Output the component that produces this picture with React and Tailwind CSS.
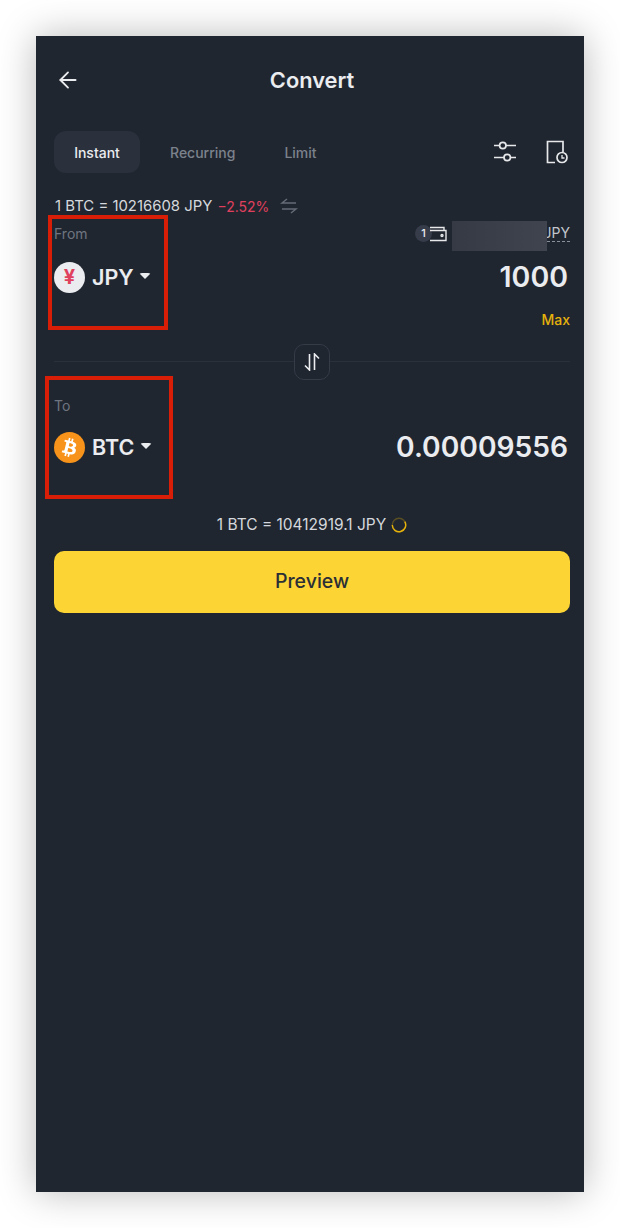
import { ArrowLeft } from "lucide-react";

const font = "font-['Inter','Liberation_Sans',sans-serif]";

function SlidersIcon() {
  return (
    <svg width="24" height="24" viewBox="0 0 24 24" fill="none" stroke="#e6e8ea" strokeWidth="1.7">
      <path d="M1 5.500h5.500M13 5.500h10M1 17.500h10M17.500 17.500h5.500" />
      <circle cx="9.800" cy="5.500" r="3.200" />
      <circle cx="14.200" cy="17.500" r="3.200" />
    </svg>
  );
}

function HistoryIcon() {
  return (
    <svg width="24" height="24" viewBox="0 0 24 24" fill="none" stroke="#e6e8ea" strokeWidth="1.7">
      <path d="M10 22.500H2.500V1.500h15.500V12" />
      <circle cx="17" cy="17.500" r="5" />
      <path d="M17 15v3h2.500" strokeWidth="1.300" />
    </svg>
  );
}

function Caret() {
  return <span className="w-0 h-0 border-x-[6px] border-x-transparent border-t-[6px] border-t-[#eaecef] rounded-sm" />;
}

function BitcoinLogo() {
  return (
    <svg width="31" height="31" viewBox="0 0 32 32">
      <circle cx="16" cy="16" r="16" fill="#f7931a" />
      <path
        fill="#fff"
        d="M23 14c.3-2.100-1.300-3.200-3.500-4l.7-2.800-1.700-.4-.7 2.700-1.400-.3.700-2.800-1.700-.4-.7 2.800-1.100-.3-2.400-.6-.5 1.800s1.300.3 1.200.3c.7.200.8.600.8 1l-.8 3.200-1.100 4.500c-.1.200-.3.500-.8.400 0 0-1.200-.3-1.200-.3l-.9 2 2.300.6 1.200.3-.7 2.900 1.700.4.700-2.800 1.400.4-.7 2.800 1.700.4.700-2.900c3 .6 5.200.3 6.100-2.400.8-2.100 0-3.400-1.600-4.200 1.100-.3 2-1.100 2.300-2.700zm-3.900 5.500c-.5 2.100-4.100 1-5.300.7l.9-3.700c1.200.3 4.900.9 4.400 3zm.5-5.500c-.5 1.900-3.500.9-4.400.7l.8-3.300c1 .2 4.100.7 3.600 2.600z"
      />
    </svg>
  );
}

export default function App() {
  return (
    <div className={`w-[620px] h-[1228px] bg-white pt-9 px-9 ${font}`}>
      <div className="relative w-[548px] h-[1156px] bg-[#202630] pl-[18px] pr-[14px] shadow-[0_0_36px_rgba(0,0,0,0.28)]">
        {/* header */}
        <div className="relative h-[88px] flex items-center justify-center">
          <ArrowLeft className="absolute left-[1px] top-[31px] text-[#eaecef]" size={26} strokeWidth={1.7} />
          <h1 className="text-[21.800px] font-semibold text-[#eaecef]">Convert</h1>
        </div>

        {/* tabs */}
        <div className="mt-[7px] flex items-center h-[42px] text-[14px] font-medium text-[#7c828c]">
          <div className="w-[86px] h-full flex items-center justify-center rounded-xl bg-[#2a303c] text-[#eaecef]">Instant</div>
          <div className="ml-[30px]">Recurring</div>
          <div className="ml-[49px]">Limit</div>
          <div className="ml-auto mr-px flex items-center gap-[28px]">
            <SlidersIcon />
            <HistoryIcon />
          </div>
        </div>

        {/* market rate */}
        <div className="mt-[21px] h-[24px] flex items-center gap-[5px] text-[14.900px] text-[#d5d8dc] pl-px">
          <span>1 BTC = 10216608 JPY</span>
          <span className="text-[14px] text-[#e0405e]">−2.52%</span>
          <svg className="ml-[6px]" width="18" height="16" viewBox="0 0 18 16" fill="none" stroke="#666c77" strokeWidth="1.500">
            <path d="M16 5H2l5-4M2 11h14l-5 4" />
          </svg>
        </div>

        {/* from */}
        <div className="mt-[5px] flex items-center justify-between h-[20px]">
          <span className="text-[14px] text-[#6f7580]">From</span>
          <div className="flex items-center text-[14px] text-[#c2c6cc] mt-[1px]">
            <span className="w-[17px] h-[17px] rounded-full bg-[#363c4a] flex items-center justify-center text-[11px] font-medium text-[#eaecef]">1</span>
            <svg className="ml-[-3px]" width="18" height="16" viewBox="0 0 18 16" fill="none" stroke="#e6e8ea" strokeWidth="1.400">
              <path d="M1 1.500h14v3M1 4.500h16v10H1" />
              <circle cx="13" cy="9.500" r="1" />
            </svg>
            <span className="w-[118px] text-right border-b border-dashed border-[#8a8f98] leading-[16px] ml-[5px]">JPY</span>
          </div>
        </div>
        <div className="mt-[18px] h-[32px] flex items-center">
          <span className="w-[31px] h-[31px] rounded-full bg-[#eaecef] flex items-center justify-center text-[20px] font-bold text-[#e0405e]">¥</span>
          <span className="ml-[7px] text-[21.500px] font-semibold text-[#eaecef]">JPY</span>
          <span className="ml-[5px] mt-[-2px] flex"><Caret /></span>
          <span className="ml-auto mr-[2px] text-[28.500px] font-semibold text-[#eaecef]">1000</span>
        </div>
        <div className="mt-[19px] text-right text-[14px] font-medium leading-[16px] text-[#e5b20c]">Max</div>

        {/* swap */}
        <div className="relative mt-[16px] h-[36px] flex items-center justify-center">
          <div className="absolute inset-x-0 top-[17px] h-px bg-[#2b313c]" />
          <div className="relative w-[36px] h-[36px] rounded-[10px] border border-[#353b47] bg-[#202630] flex items-center justify-center">
            <svg width="18" height="18" viewBox="0 0 18 18" fill="none" stroke="#eaecef" strokeWidth="1.600">
              <path d="M6.500 1v16L2 12.500M11.500 17V1L16 5.500" />
            </svg>
          </div>
        </div>

        {/* to */}
        <div className="mt-[15px] h-[20px] flex items-center text-[14px] text-[#6f7580]">To</div>
        <div className="mt-[16px] h-[32px] flex items-center">
          <BitcoinLogo />
          <span className="ml-[7px] text-[21.500px] font-semibold text-[#eaecef]">BTC</span>
          <span className="ml-[6px] mt-[-2px] flex"><Caret /></span>
          <span className="ml-auto mr-[2px] text-[28.200px] font-semibold text-[#eaecef]">0.00009556</span>
        </div>

        {/* quote */}
        <div className="mt-[52px] h-[20px] flex items-center justify-center gap-[5px] text-[15.500px] text-[#d5d8dc]">
          <span>1 BTC = 10412919.1 JPY</span>
          <svg width="16" height="16" viewBox="0 0 16 16" fill="none">
            <circle cx="8" cy="8" r="6.700" stroke="#5a4f22" strokeWidth="1.400" />
            <path d="M1.300 8a6.700 6.700 0 1 0 12.500-3.300" stroke="#e5b20c" strokeWidth="1.400" />
          </svg>
        </div>

        <button className="mt-[16px] w-full h-[62px] rounded-[10px] bg-[#fcd535] text-[#2b2f36] text-[19.500px] font-medium">Preview</button>

        {/* balance mask */}
        <div className="absolute left-[416px] top-[185px] w-[95px] h-[30px] bg-gradient-to-r from-[#363a44] to-[#40444e]" />
        {/* red annotation boxes */}
        <div className="absolute left-[12px] top-[179px] w-[120px] h-[115px] border-4 border-[#d81e06]" />
        <div className="absolute left-[9px] top-[340px] w-[128px] h-[123px] border-4 border-[#d81e06]" />
      </div>
    </div>
  );
}
